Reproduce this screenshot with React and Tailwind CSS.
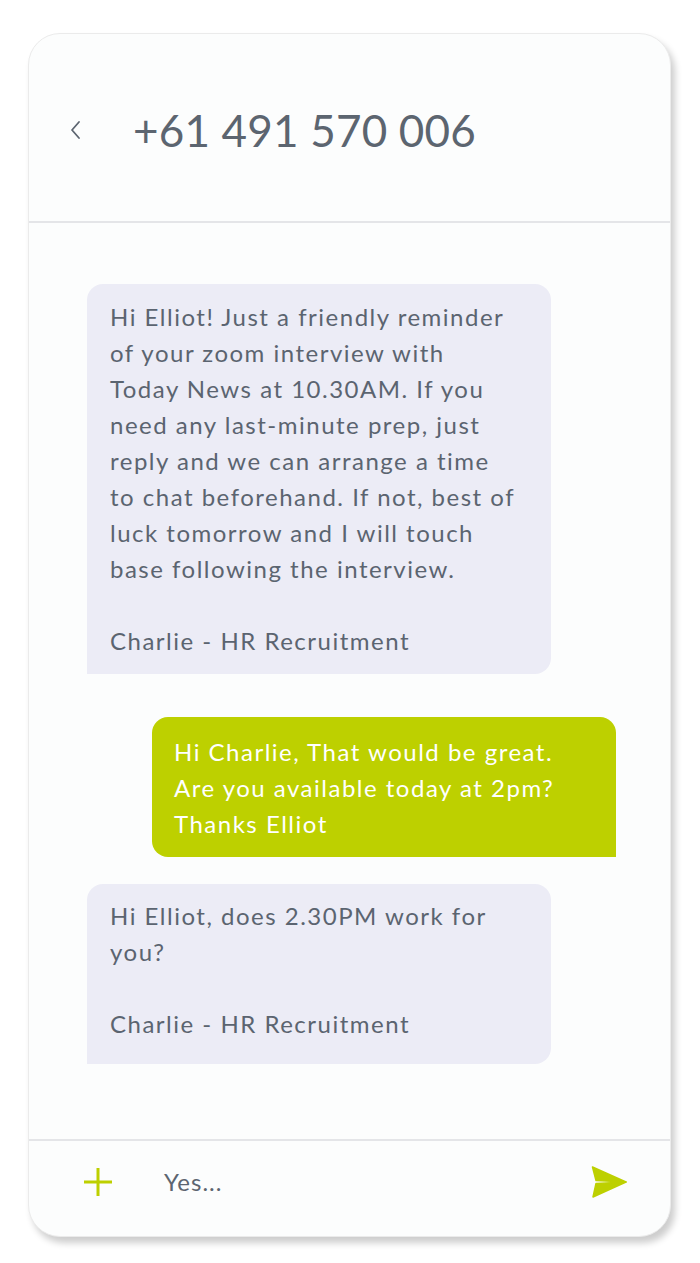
import React from "react";

const font = { fontFamily: "Lato, 'Open Sans', 'Noto Sans', sans-serif" };

function Chevron() {
  return (
    <svg width="12" height="20" viewBox="0 0 12 20" fill="none">
      <polyline points="10,2 3,10 10,18" stroke="#5c6570" strokeWidth="1.8" strokeLinecap="round" strokeLinejoin="round" />
    </svg>
  );
}

function Plus() {
  return (
    <svg width="30" height="30" viewBox="0 0 30 30" fill="none">
      <line x1="15" y1="1" x2="15" y2="29" stroke="#bdd000" strokeWidth="3" />
      <line x1="1" y1="15" x2="29" y2="15" stroke="#bdd000" strokeWidth="3" />
    </svg>
  );
}

function Send() {
  return (
    <svg width="36" height="34" viewBox="0 0 36 34">
      <path d="M1.5 2 L35 17 L5 15.6 Z" fill="#bdd000" stroke="#bdd000" strokeWidth="1.5" strokeLinejoin="round" />
      <path d="M5 18.4 L35 17 L2 32 Z" fill="#bdd000" stroke="#bdd000" strokeWidth="1.5" strokeLinejoin="round" />
    </svg>
  );
}

export default function App() {
  return (
    <div className="w-[700px] h-[1263px] bg-white pl-[28px] pt-[33px]" style={font}>
      <div className="w-[643px] h-[1204px] bg-[#fcfdfd] rounded-[32px] border border-[#ebebeb] shadow-[4px_6px_7px_rgba(0,0,0,0.2)] flex flex-col overflow-hidden">
        <div className="h-[189px] shrink-0 flex items-center border-b-2 border-[#e4e5e8] pt-[4px]">
          <div className="ml-[40px] w-[12px] flex items-center">
            <Chevron />
          </div>
          <div className="ml-[52px] text-[44px] leading-none text-[#5c6570] tracking-[0.2px]">+61 491 570 006</div>
        </div>
        <div className="flex-1 flex flex-col pt-[61px] tracking-[1.5px]">
          <div className="ml-[58px] w-[464px] bg-[#ececf6] rounded-[16px] rounded-bl-none pl-[23px] pr-[6px] pt-[15px] pb-[15px] text-[24px] leading-[36px] text-[#5b6470] whitespace-nowrap">
            Hi Elliot! Just a friendly reminder<br />
            of your zoom interview with<br />
            Today News at 10.30AM. If you<br />
            need any last-minute prep, just<br />
            reply and we can arrange a time<br />
            to chat beforehand. If not, best of<br />
            luck tomorrow and I will touch<br />
            base following the interview.<br />
            <br />
            Charlie - HR Recruitment
          </div>
          <div className="ml-[123px] mt-[43px] w-[464px] bg-[#bdd000] rounded-[16px] rounded-br-none pl-[22px] pr-[6px] pt-[17px] pb-[15px] text-[24px] leading-[36px] text-white whitespace-nowrap">
            Hi Charlie, That would be great.<br />
            Are you available today at 2pm?<br />
            Thanks Elliot
          </div>
          <div className="ml-[58px] mt-[27px] w-[464px] bg-[#ececf6] rounded-[16px] rounded-bl-none pl-[23px] pr-[6px] pt-[14px] pb-[22px] text-[24px] leading-[36px] text-[#5b6470] whitespace-nowrap">
            Hi Elliot, does 2.30PM work for<br />
            you?<br />
            <br />
            Charlie - HR Recruitment
          </div>
        </div>
        <div className="h-[97px] shrink-0 border-t-2 border-[#e4e5e8] flex items-center pb-[13px]">
          <div className="ml-[54px]">
            <Plus />
          </div>
          <div className="ml-[51px] text-[24px] text-[#5c6570] leading-none tracking-[1px]">Yes...</div>
          <div className="ml-auto mr-[43px]">
            <Send />
          </div>
        </div>
      </div>
    </div>
  );
}
